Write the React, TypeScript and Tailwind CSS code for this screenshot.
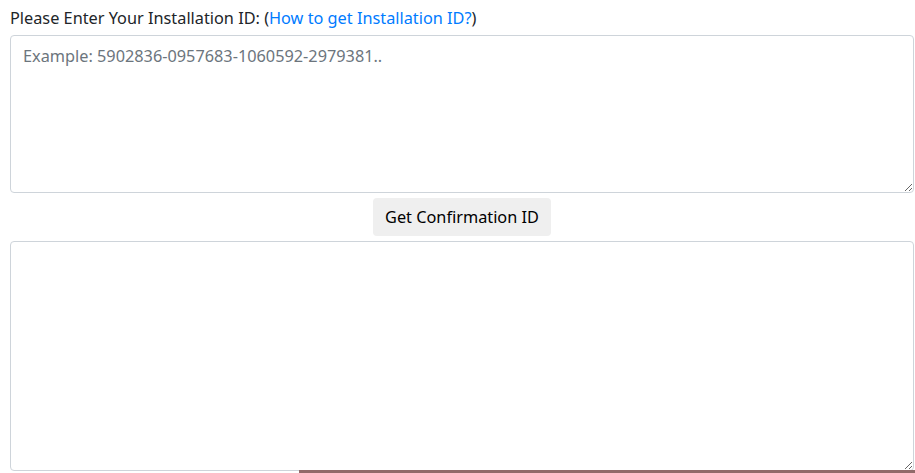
export default function App() {
  return (
    <div className="h-[473px] w-[915px] overflow-hidden bg-white font-['Noto_Sans',sans-serif] text-[16.3px] text-[#212529]">
      <div className="pl-[10px] pr-px">
        <p className="pt-[6px] leading-6">
          Please Enter Your Installation ID: (
          <a href="#" className="text-[#007bff]">How to get Installation ID?</a>)
        </p>
        <textarea
          className="mt-[5px] block h-[158px] w-full resize-y rounded border border-[#ced4da] px-3 pt-2 pb-[6px] leading-6 outline-none placeholder:text-[#6c757d]"
          placeholder="Example: 5902836-0957683-1060592-2979381.."
        />
        <div className="flex justify-center py-[5px]">
          <button className="h-[38px] rounded bg-[#efefef] px-3 leading-6 text-black">
            Get Confirmation ID
          </button>
        </div>
        <textarea className="block h-[230px] w-full resize-y rounded border border-[#ced4da] px-3 py-[6px] leading-6 outline-none" />
      </div>
      <div className="-mt-[1px] ml-[299px] h-1 bg-[#916a6a]" />
    </div>
  );
}
